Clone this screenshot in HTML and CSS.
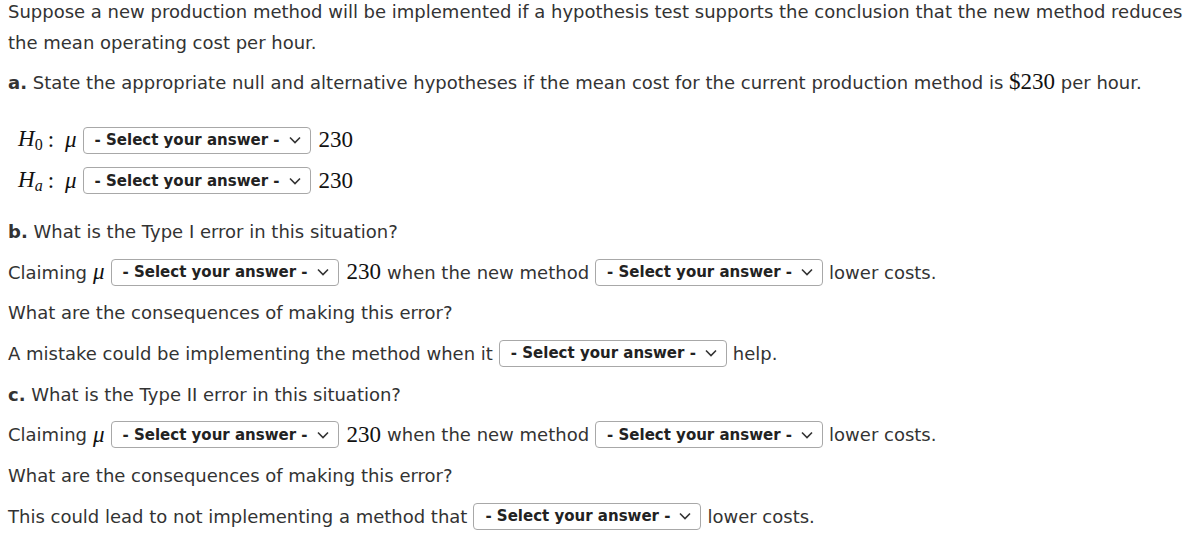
FILE: index.html
```html
<!DOCTYPE html>
<html>
<head>
<meta charset="utf-8">
<link rel="stylesheet" href="styles.css">
</head>
<body>
<div class="page">
  <p class="intro">Suppose a new production method will be implemented if a hypothesis test supports the conclusion that the new method reduces<br>the mean operating cost per hour.</p>

  <div class="row row-a"><span><b>a.</b> State the appropriate null and alternative hypotheses if the mean cost for the current production method is <span class="math num">$230</span> per hour.</span></div>

  <div class="row hyp first">
    <span class="math"><i>H</i><sub>0</sub></span><span class="math colon">:</span><i class="math mu">μ</i>
    <div class="sel"><span>- Select your answer -</span><svg width="12" height="8" viewBox="0 0 12 8"><path d="M1 1.5 L6 6.5 L11 1.5" fill="none" stroke="#333" stroke-width="1.6"/></svg></div>
    <span class="math num">230</span>
  </div>
  <div class="row hyp">
    <span class="math"><i>H</i><sub><i>a</i></sub></span><span class="math colon">:</span><i class="math mu">μ</i>
    <div class="sel"><span>- Select your answer -</span><svg width="12" height="8" viewBox="0 0 12 8"><path d="M1 1.5 L6 6.5 L11 1.5" fill="none" stroke="#333" stroke-width="1.6"/></svg></div>
    <span class="math num">230</span>
  </div>

  <div class="row row-b"><span><b>b.</b> What is the Type I error in this situation?</span></div>
  <div class="row">
    <span>Claiming</span><i class="math mu">μ</i>
    <div class="sel"><span>- Select your answer -</span><svg width="12" height="8" viewBox="0 0 12 8"><path d="M1 1.5 L6 6.5 L11 1.5" fill="none" stroke="#333" stroke-width="1.6"/></svg></div>
    <span class="math num">230</span><span>when the new method</span>
    <div class="sel"><span>- Select your answer -</span><svg width="12" height="8" viewBox="0 0 12 8"><path d="M1 1.5 L6 6.5 L11 1.5" fill="none" stroke="#333" stroke-width="1.6"/></svg></div>
    <span>lower costs.</span>
  </div>
  <div class="row"><span>What are the consequences of making this error?</span></div>
  <div class="row">
    <span>A mistake could be implementing the method when it</span>
    <div class="sel"><span>- Select your answer -</span><svg width="12" height="8" viewBox="0 0 12 8"><path d="M1 1.5 L6 6.5 L11 1.5" fill="none" stroke="#333" stroke-width="1.6"/></svg></div>
    <span>help.</span>
  </div>

  <div class="row"><span><b>c.</b> What is the Type II error in this situation?</span></div>
  <div class="row">
    <span>Claiming</span><i class="math mu">μ</i>
    <div class="sel"><span>- Select your answer -</span><svg width="12" height="8" viewBox="0 0 12 8"><path d="M1 1.5 L6 6.5 L11 1.5" fill="none" stroke="#333" stroke-width="1.6"/></svg></div>
    <span class="math num">230</span><span>when the new method</span>
    <div class="sel"><span>- Select your answer -</span><svg width="12" height="8" viewBox="0 0 12 8"><path d="M1 1.5 L6 6.5 L11 1.5" fill="none" stroke="#333" stroke-width="1.6"/></svg></div>
    <span>lower costs.</span>
  </div>
  <div class="row"><span>What are the consequences of making this error?</span></div>
  <div class="row">
    <span>This could lead to not implementing a method that</span>
    <div class="sel"><span>- Select your answer -</span><svg width="12" height="8" viewBox="0 0 12 8"><path d="M1 1.5 L6 6.5 L11 1.5" fill="none" stroke="#333" stroke-width="1.6"/></svg></div>
    <span>lower costs.</span>
  </div>
</div>
</body>
</html>
```

FILE: styles.css
```css
html, body {
  margin: 0;
  padding: 0;
  background: #fff;
}
body {
  font-family: "DejaVu Sans", Verdana, sans-serif;
  font-size: 18px;
  color: #333;
}
.page {
  padding: 0 8px;
}
.intro {
  margin: -4px 0 0 0;
  line-height: 31px;
  white-space: nowrap;
}
.row {
  display: flex;
  align-items: center;
  height: 40.7px;
  white-space: nowrap;
  gap: 6px;
}
.row-a {
  margin-top: 4px;
}
.hyp {
  padding-left: 10px;
  gap: 0;
}
.hyp.first {
  margin-top: 17px;
}
.row-b {
  margin-top: 10px;
}
b {
  font-weight: bold;
}
.math {
  font-family: "Liberation Serif", "DejaVu Serif", serif;
  font-size: 23px;
  color: #111;
}
.math i {
  font-style: italic;
}
.math sub {
  font-size: 16px;
  vertical-align: -4px;
}
.num {
  font-style: normal;
}
.colon {
  margin-left: 5px;
  margin-right: 11px;
}
.mu {
  font-style: italic;
}
.row .sel + .num {
  margin-left: 2px;
}
.hyp .mu {
  margin-right: 6px;
}
.hyp .sel + .num {
  margin-left: 8px;
}
.sel {
  display: inline-flex;
  flex: none;
  align-items: center;
  justify-content: space-between;
  box-sizing: border-box;
  width: 228px;
  height: 27px;
  padding: 0 9px 0 11px;
  border: 1px solid #a8a8a8;
  border-radius: 4px;
  background: #fff;
  font-size: 15px;
  font-weight: bold;
  color: #222;
}
.sel svg {
  flex: none;
}
```
